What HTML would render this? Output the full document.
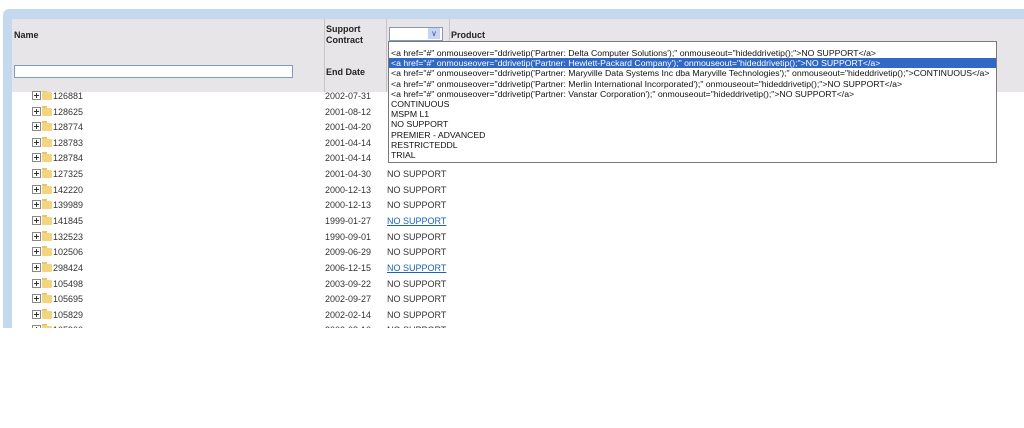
<!DOCTYPE html>
<html><head><style>
body{margin:0;width:1024px;height:428px;background:#fff;font-family:"Liberation Sans",sans-serif;position:relative;overflow:hidden}
.a{position:absolute}
.panel{left:3px;top:9px;width:1021px;height:319px;background:#c5d9ee;border-radius:6px 0 0 0}
.inner{left:12px;top:19px;width:1012px;height:309px;background:#fff}
.hdr{left:12px;top:19px;width:1012px;height:73px;background:#e8e5e8}
.b{font-weight:bold;font-size:9px;color:#222}
.row{position:absolute;left:0;width:1024px;font-size:9px;color:#333;height:15px;white-space:nowrap}
.pl{position:absolute;left:32px;top:0px;width:7px;height:7px;border:1px solid #888;background:#fff}
.pl:before{content:"";position:absolute;left:1px;top:3px;width:5px;height:1px;background:#333}
.pl:after{content:"";position:absolute;left:3px;top:1px;width:1px;height:5px;background:#333}
.fo{position:absolute;left:42px;top:1px;width:10px;height:8px;background:#f2d57e;border-radius:1px}
.fo:before{content:"";position:absolute;left:0;top:-2px;width:5px;height:2px;background:#e8c66a}
.nm{position:absolute;left:53px;top:0}
.dt{position:absolute;left:325px;top:0}
.st{position:absolute;left:387px;top:0}
.lk{color:#1a63b8;text-decoration:underline}
.dd{left:388px;top:41px;width:607px;height:120px;background:#fff;border:1px solid #7a7a7a;font-size:8.7px;color:#111;white-space:nowrap;overflow:hidden}
.dd div{height:10.2px;line-height:10px;padding-left:2px}
.dd .h{background:#3167c5;color:#fff}
</style></head><body>
<div class="a panel"></div>
<div class="a inner"></div>
<div class="a hdr"></div>
<div class="a" style="left:324px;top:19px;width:1px;height:73px;background:#c8c4c8"></div>
<div class="a" style="left:386px;top:19px;width:1px;height:73px;background:#c8c4c8"></div>
<div class="a" style="left:449px;top:19px;width:1px;height:22px;background:#c8c4c8"></div>
<div class="a b" style="left:14px;top:30px">Name</div>
<div class="a" style="left:14px;top:65px;width:277px;height:11px;border:1px solid #7f9db9;background:#fff"></div>
<div class="a b" style="left:326px;top:24px;line-height:11px">Support<br>Contract</div>
<div class="a b" style="left:326px;top:67px">End Date</div>
<div class="a b" style="left:451px;top:30px">Product</div>
<div class="a" style="left:389px;top:27px;width:52px;height:12px;border:1px solid #7f9db9;background:#fff"></div>
<div class="a" style="left:428px;top:28px;width:12px;height:11px;background:#c6d3f5;color:#3a5a9a;font-size:8px;text-align:center;line-height:11px">&#8744;</div>
<div class="a" style="left:0;top:91px;width:1024px;height:237px;overflow:hidden">
<div class="row" style="top:0"><span class="pl"></span><span class="fo"></span><span class="nm">126881</span><span class="dt">2002-07-31</span></div>
<div class="row" style="top:16px"><span class="pl"></span><span class="fo"></span><span class="nm">128625</span><span class="dt">2001-08-12</span></div>
<div class="row" style="top:31px"><span class="pl"></span><span class="fo"></span><span class="nm">128774</span><span class="dt">2001-04-20</span></div>
<div class="row" style="top:47px"><span class="pl"></span><span class="fo"></span><span class="nm">128783</span><span class="dt">2001-04-14</span></div>
<div class="row" style="top:62px"><span class="pl"></span><span class="fo"></span><span class="nm">128784</span><span class="dt">2001-04-14</span></div>
<div class="row" style="top:78px"><span class="pl"></span><span class="fo"></span><span class="nm">127325</span><span class="dt">2001-04-30</span><span class="st">NO SUPPORT</span></div>
<div class="row" style="top:94px"><span class="pl"></span><span class="fo"></span><span class="nm">142220</span><span class="dt">2000-12-13</span><span class="st">NO SUPPORT</span></div>
<div class="row" style="top:109px"><span class="pl"></span><span class="fo"></span><span class="nm">139989</span><span class="dt">2000-12-13</span><span class="st">NO SUPPORT</span></div>
<div class="row" style="top:125px"><span class="pl"></span><span class="fo"></span><span class="nm">141845</span><span class="dt">1999-01-27</span><span class="st lk">NO SUPPORT</span></div>
<div class="row" style="top:141px"><span class="pl"></span><span class="fo"></span><span class="nm">132523</span><span class="dt">1990-09-01</span><span class="st">NO SUPPORT</span></div>
<div class="row" style="top:156px"><span class="pl"></span><span class="fo"></span><span class="nm">102506</span><span class="dt">2009-06-29</span><span class="st">NO SUPPORT</span></div>
<div class="row" style="top:172px"><span class="pl"></span><span class="fo"></span><span class="nm">298424</span><span class="dt">2006-12-15</span><span class="st lk">NO SUPPORT</span></div>
<div class="row" style="top:188px"><span class="pl"></span><span class="fo"></span><span class="nm">105498</span><span class="dt">2003-09-22</span><span class="st">NO SUPPORT</span></div>
<div class="row" style="top:203px"><span class="pl"></span><span class="fo"></span><span class="nm">105695</span><span class="dt">2002-09-27</span><span class="st">NO SUPPORT</span></div>
<div class="row" style="top:219px"><span class="pl"></span><span class="fo"></span><span class="nm">105829</span><span class="dt">2002-02-14</span><span class="st">NO SUPPORT</span></div>
<div class="row" style="top:234px"><span class="pl"></span><span class="fo"></span><span class="nm">105900</span><span class="dt">2003-08-10</span><span class="st">NO SUPPORT</span></div>
</div>
<div class="a dd">
<div style="height:6px"></div>
<div>&lt;a href="#" onmouseover="ddrivetip('Partner: Delta Computer Solutions');" onmouseout="hideddrivetip();"&gt;NO SUPPORT&lt;/a&gt;</div>
<div class="h">&lt;a href="#" onmouseover="ddrivetip('Partner: Hewlett-Packard Company');" onmouseout="hideddrivetip();"&gt;NO SUPPORT&lt;/a&gt;</div>
<div>&lt;a href="#" onmouseover="ddrivetip('Partner: Maryville Data Systems Inc dba Maryville Technologies');" onmouseout="hideddrivetip();"&gt;CONTINUOUS&lt;/a&gt;</div>
<div>&lt;a href="#" onmouseover="ddrivetip('Partner: Merlin International Incorporated');" onmouseout="hideddrivetip();"&gt;NO SUPPORT&lt;/a&gt;</div>
<div>&lt;a href="#" onmouseover="ddrivetip('Partner: Vanstar Corporation');" onmouseout="hideddrivetip();"&gt;NO SUPPORT&lt;/a&gt;</div>
<div>CONTINUOUS</div>
<div>MSPM L1</div>
<div>NO SUPPORT</div>
<div>PREMIER - ADVANCED</div>
<div>RESTRICTEDDL</div>
<div>TRIAL</div>
</div>
</body></html>
